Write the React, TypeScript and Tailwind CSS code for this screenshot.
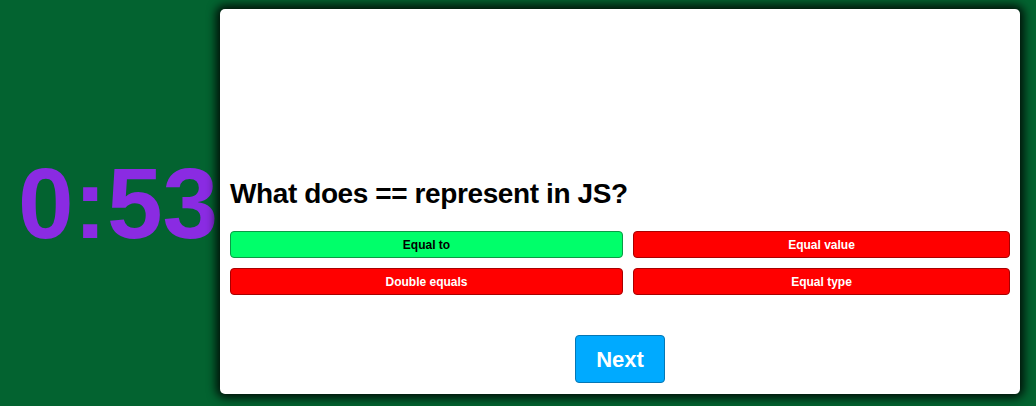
import React from 'react'

const answers = [
  { text: 'Equal to', correct: true },
  { text: 'Equal value', correct: false },
  { text: 'Double equals', correct: false },
  { text: 'Equal type', correct: false },
]

export default function App() {
  return (
    <div
      className="w-[1036px] h-[406px] bg-[#036330] flex items-center overflow-hidden"
      style={{ fontFamily: '"Liberation Sans", Arial, sans-serif' }}
    >
      <div className="w-[220px] shrink-0 pl-[18px] text-[100px] leading-none font-bold text-[#8a2be2]">
        0:53
      </div>

      <div className="w-[800px] h-[385px] mt-[-3px] bg-white rounded-[5px] shadow-[0_0_10px_4px_rgba(0,0,0,0.85)] flex flex-col justify-end px-[10px] pb-[11px]">
        <h1 className="text-[28px] leading-[32px] font-bold text-black tracking-[-0.4px]">
          What does == represent in JS?
        </h1>

        <div className="mt-[21px] grid grid-cols-[393px_377px] gap-[10px]">
          {answers.map((a) => (
            <button
              key={a.text}
              className={
                a.correct
                  ? 'h-[27px] rounded-[4px] border border-[#0a9a45] bg-[#00ff6a] text-black text-[12px] font-bold'
                  : 'h-[27px] rounded-[4px] border border-[#a80000] bg-[#ff0000] text-white text-[12px] font-bold'
              }
            >
              {a.text}
            </button>
          ))}
        </div>

        <div className="mt-[40px] flex justify-center">
          <button className="w-[90px] h-[48px] rounded-[4px] border border-[#0577b5] bg-[#00aaff] text-white text-[22px] font-bold">
            Next
          </button>
        </div>
      </div>
    </div>
  )
}
